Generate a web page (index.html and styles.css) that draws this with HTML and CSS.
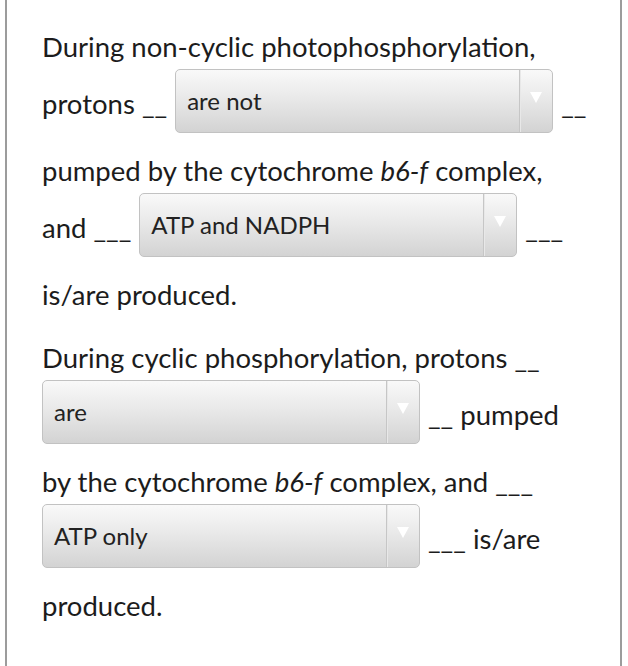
FILE: index.html
```html
<!DOCTYPE html>
<html lang="en">
<head>
<meta charset="utf-8">
<title>Photophosphorylation</title>
<link rel="stylesheet" href="styles.css">
</head>
<body>
<div class="frame">
  <div class="para">
    <div class="row">During non-cyclic photophosphorylation,</div>
    <div class="row row-box">
      <span class="txt">protons __</span>
      <div class="dropdown"><span class="val">are not</span><span class="arrow"><span class="tri"></span></span></div>
      <span class="txt">__</span>
    </div>
    <div class="row">pumped by the cytochrome <em>b6-f</em> complex,</div>
    <div class="row row-box">
      <span class="txt">and ___</span>
      <div class="dropdown"><span class="val">ATP and NADPH</span><span class="arrow"><span class="tri"></span></span></div>
      <span class="txt">___</span>
    </div>
    <div class="row">is/are produced.</div>
  </div>
  <div class="para para-2">
    <div class="row">During cyclic phosphorylation, protons __</div>
    <div class="row row-box">
      <div class="dropdown"><span class="val">are</span><span class="arrow"><span class="tri"></span></span></div>
      <span class="txt">__ pumped</span>
    </div>
    <div class="row">by the cytochrome <em>b6-f</em> complex, and ___</div>
    <div class="row row-box">
      <div class="dropdown"><span class="val">ATP only</span><span class="arrow"><span class="tri"></span></span></div>
      <span class="txt">___ is/are</span>
    </div>
    <div class="row">produced.</div>
  </div>
</div>
</body>
</html>
```
FILE: styles.css
```css
html, body {
  margin: 0;
  padding: 0;
  background: #ffffff;
}
body {
  font-family: Lato, "Open Sans", sans-serif;
  font-size: 27.5px;
  color: #1c1c1c;
}
.frame {
  margin: 0 6px 0 5px;
  border-left: 2px solid #9c9c9c;
  border-right: 2px solid #9c9c9c;
  min-height: 666px;
  box-sizing: border-box;
  padding: 29px 10px 0 35px;
}
.para {
  display: flex;
  flex-direction: column;
  gap: 4px;
}
.para-2 {
  margin-top: 27px;
}
.row {
  line-height: 36px;
  white-space: nowrap;
}
.row em {
  font-style: italic;
}
.row-box {
  display: flex;
  align-items: flex-start;
  gap: 8px;
  margin-bottom: 16px;
}
.row-box .txt {
  line-height: 36px;
  padding-top: 17px;
}
.dropdown {
  width: 378px;
  height: 64px;
  box-sizing: border-box;
  border: 1px solid #c2c2c2;
  border-radius: 5px;
  background: linear-gradient(#f9f9f9, #e9e9e9 45%, #d3d3d3);
  display: flex;
  flex-shrink: 0;
}
.dropdown .val {
  flex: 1;
  font-size: 24px;
  line-height: 28px;
  padding: 17px 0 0 11px;
  color: #222222;
}
.dropdown .arrow {
  width: 33px;
  border-left: 1px solid #c6c6c6;
  box-shadow: inset 1px 0 0 #e8e8e8;
  display: flex;
  justify-content: center;
  padding-top: 22px;
  box-sizing: border-box;
}
.dropdown .tri {
  width: 0;
  height: 0;
  border-left: 6px solid transparent;
  border-right: 6px solid transparent;
  border-top: 11px solid #ffffff;
}
```
